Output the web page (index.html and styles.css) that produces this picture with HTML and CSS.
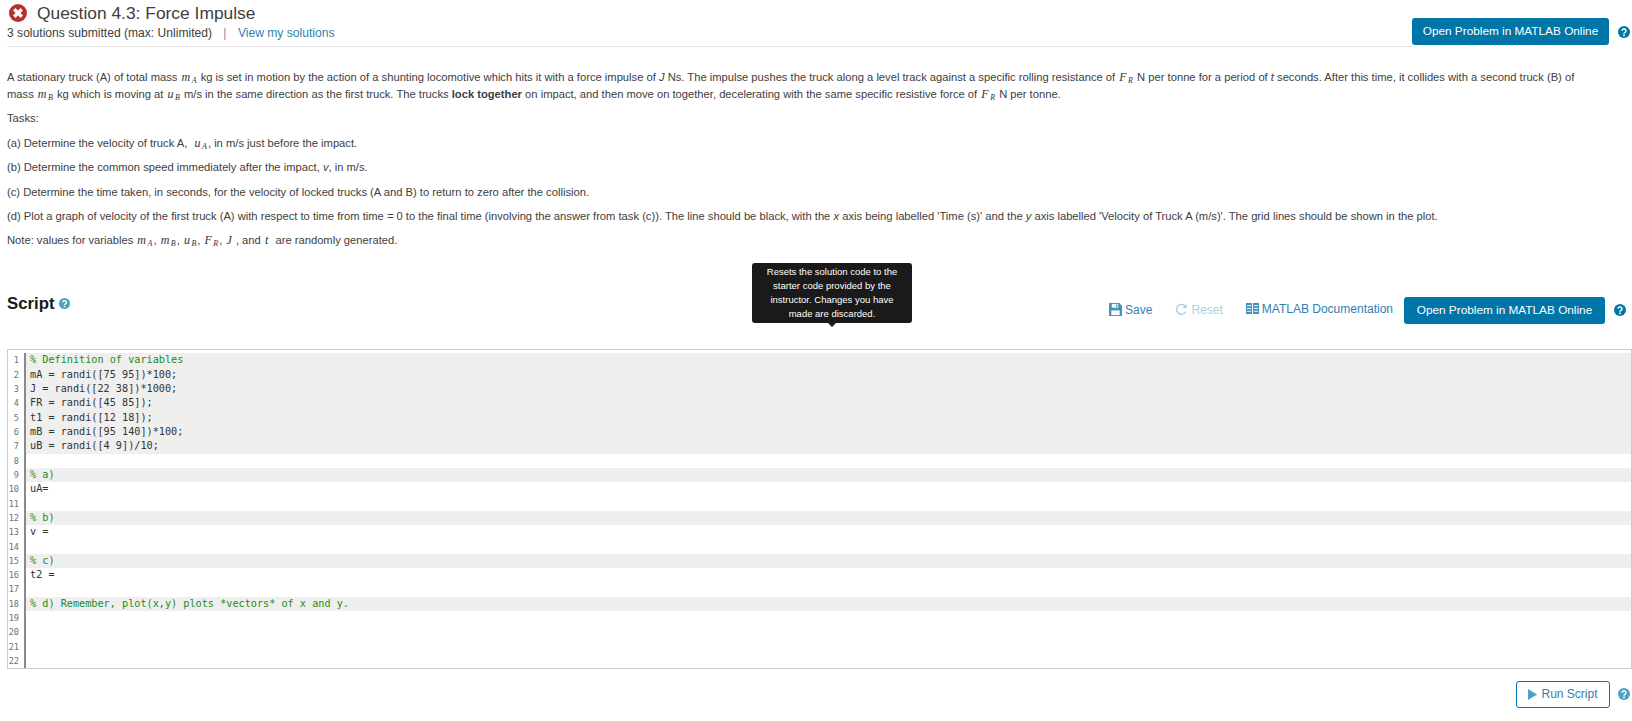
FILE: index.html
```html
<!DOCTYPE html>
<html lang="en">
<head>
<meta charset="utf-8">
<title>Question 4.3: Force Impulse</title>
<link rel="stylesheet" href="styles.css">
</head>
<body>
<svg class="defs" width="0" height="0" aria-hidden="true">
  <symbol id="help" viewBox="0 0 24 24">
    <circle cx="12" cy="12" r="12" fill="currentColor"/>
    <path d="M8 9.4a4 3.7 0 1 1 6.2 3.1c-1.5 1-2.2 1.5-2.2 3" fill="none" stroke="#fff" stroke-width="3"/>
    <rect x="10.3" y="17" width="3.4" height="3.2" fill="#fff"/>
  </symbol>
</svg>
<header class="head">
  <div class="head-main">
    <h1 class="title">
      <svg class="fail" viewBox="0 0 20 20"><circle cx="10" cy="10" r="10" fill="#b8312b"/><path d="M5.8 5.8l8.4 8.4M14.2 5.8l-8.4 8.4" stroke="#fff" stroke-width="3.8"/></svg>
      <span>Question 4.3: Force Impulse</span>
    </h1>
    <div class="sub">3 solutions submitted (max: Unlimited) <span class="sep">|</span> <a class="link" href="#">View my solutions</a></div>
  </div>
  <a class="btn" href="#">Open Problem in MATLAB Online</a>
  <svg class="help dark"><use href="#help"/></svg>
</header>

<section class="desc">
  <p>A stationary truck (A) of total mass <i class="m">m<sub>A</sub></i> kg is set in motion by the action of a shunting locomotive which hits it with a force impulse of <i>J</i> Ns. The impulse pushes the truck along a level track against a specific rolling resistance of <i class="m">F<sub>R</sub></i> N per tonne for a period of <i>t</i> seconds. After this time, it collides with a second truck (B) of mass <i class="m">m<sub>B</sub></i> kg which is moving at <i class="m">u<sub>B</sub></i> m/s in the same direction as the first truck. The trucks <b>lock together</b> on impact, and then move on together, decelerating with the same specific resistive force of <i class="m">F<sub>R</sub></i> N per tonne.</p>
  <p>Tasks:</p>
  <p>(a) Determine the velocity of truck A, &nbsp;<i class="m">u<sub>A</sub></i>, in m/s just before the impact.</p>
  <p>(b) Determine the common speed immediately after the impact, <i>v</i>, in m/s.</p>
  <p>(c) Determine the time taken, in seconds, for the velocity of locked trucks (A and B) to return to zero after the collision.</p>
  <p>(d) Plot a graph of velocity of the first truck (A) with respect to time from time = 0 to the final time (involving the answer from task (c)). The line should be black, with the <i>x</i> axis being labelled 'Time (s)' and the <i>y</i> axis labelled 'Velocity of Truck A (m/s)'. The grid lines should be shown in the plot.</p>
  <p>Note: values for variables <i class="m">m<sub>A</sub></i>, <i class="m">m<sub>B</sub></i>, <i class="m">u<sub>B</sub></i>, <i class="m">F<sub>R</sub></i>, <i class="m">J</i> , and <i class="m">t</i> &nbsp;are randomly generated.</p>
</section>

<section class="bar">
  <h2 class="script">Script <svg class="help small light"><use href="#help"/></svg></h2>
  <div class="actions">
    <a class="act" href="#">
      <svg class="ico" viewBox="0 0 14 14"><path d="M0 0h11l3 3v11H0z" fill="#3f93bd"/><rect x="3" y="1" width="7" height="4" fill="#fff"/><rect x="2.5" y="8" width="9" height="5" fill="#fff"/><rect x="7.5" y="1.6" width="1.5" height="2.6" fill="#3f93bd"/></svg>
      Save
    </a>
    <a class="act off" href="#">
      <svg class="ico" viewBox="0 0 14 14"><path d="M11.6 9.4A5.3 5.3 0 1 1 11 3.4" fill="none" stroke="#a9d0e3" stroke-width="1.5"/><path d="M12.6 .8v4.6H8z" fill="#a9d0e3"/></svg>
      Reset
    </a>
    <a class="act doc" href="#">
      <svg class="ico" viewBox="0 0 14 12"><path d="M0 0h6.4v12H0zM7.6 0H14v12H7.6z" fill="#3f93bd"/><path d="M1 3h4.4M1 6h4.4M1 9h4.4M8.6 3H13M8.6 6H13M8.6 9H13" stroke="#fff"/></svg>
      MATLAB Documentation
    </a>
    <a class="btn" href="#">Open Problem in MATLAB Online</a>
    <svg class="help dark"><use href="#help"/></svg>
  </div>
  <div class="tip">Resets the solution code to the starter code provided by the instructor. Changes you have made are discarded.</div>
</section>

<section class="editor">
  <div class="row shade"><span class="num">1</span><code class="c">% Definition of variables</code></div>
  <div class="row shade"><span class="num">2</span><code>mA = randi([75 95])*100;</code></div>
  <div class="row shade"><span class="num">3</span><code>J = randi([22 38])*1000;</code></div>
  <div class="row shade"><span class="num">4</span><code>FR = randi([45 85]);</code></div>
  <div class="row shade"><span class="num">5</span><code>t1 = randi([12 18]);</code></div>
  <div class="row shade"><span class="num">6</span><code>mB = randi([95 140])*100;</code></div>
  <div class="row shade"><span class="num">7</span><code>uB = randi([4 9])/10;</code></div>
  <div class="row"><span class="num">8</span><code></code></div>
  <div class="row shade"><span class="num">9</span><code class="c">% a)</code></div>
  <div class="row"><span class="num">10</span><code>uA=</code></div>
  <div class="row"><span class="num">11</span><code></code></div>
  <div class="row shade"><span class="num">12</span><code class="c">% b)</code></div>
  <div class="row"><span class="num">13</span><code>v =</code></div>
  <div class="row"><span class="num">14</span><code></code></div>
  <div class="row shade"><span class="num">15</span><code class="c">% c)</code></div>
  <div class="row"><span class="num">16</span><code>t2 =</code></div>
  <div class="row"><span class="num">17</span><code></code></div>
  <div class="row shade"><span class="num">18</span><code class="c">% d) Remember, plot(x,y) plots *vectors* of x and y.</code></div>
  <div class="row"><span class="num">19</span><code></code></div>
  <div class="row"><span class="num">20</span><code></code></div>
  <div class="row"><span class="num">21</span><code></code></div>
  <div class="row"><span class="num">22</span><code></code></div>
</section>

<footer class="foot">
  <a class="run" href="#"><svg class="play" viewBox="0 0 10 12"><path d="M0 0l10 6-10 6z" fill="#4f9fc7"/></svg>Run Script</a>
  <svg class="help light"><use href="#help"/></svg>
</footer>
</body>
</html>
```
FILE: styles.css
```css
* { box-sizing: border-box; }
html, body { margin: 0; padding: 0; }
body {
  background: #fff;
  color: #404040;
  font-family: "Liberation Sans", Arial, sans-serif;
  font-size: 11.2px;
  height: 721px;
  overflow: hidden;
  padding: 0 0 0 7px;
}
.defs { position: absolute; }
a { text-decoration: none; }

.head { display: flex; align-items: flex-start; height: 47px; }
.head-main { flex: 1; height: 47px; border-bottom: 1px solid #e6e6e6; }
.title {
  display: flex; align-items: center; gap: 10px;
  margin: 0; padding: 4px 0 0 2px;
  font-size: 17.4px; font-weight: 400; line-height: 18px; color: #404040;
}
.fail { width: 18px; height: 18px; flex: none; }
.sub { font-size: 12.1px; line-height: 16px; margin-top: 3px; color: #404040; }
.sep { margin: 0 8px; color: #888; }
.link { color: #2f7fb3; }
.btn {
  display: block; flex: none;
  width: 197px; height: 27px; margin-top: 18px;
  background: #0076a8; border-radius: 3px;
  color: #fff; font-size: 11.8px; line-height: 27px; text-align: center;
}
.help { width: 12px; height: 12px; flex: none; }
.dark { color: #0076a8; }
.light { color: #4f9fc7; }
.head .help { margin: 26px 2px 0 9px; }

.desc { padding-top: 22px; padding-right: 40px; line-height: 17px; }
.desc p { margin: 0 0 7.4px; }
.m { font-family: "Liberation Serif", serif; font-size: 12px; font-style: italic; color: #333; margin: 0 1px; }
.m sub { font-size: 8px; line-height: 0; vertical-align: -2px; padding-left: 1.5px; }
.desc b { font-weight: 700; }

.bar { position: relative; display: flex; justify-content: space-between; align-items: flex-start; height: 92px; }
.script { display: flex; align-items: center; gap: 4px; margin: 36px 0 0; color: #1a1a1a; font-size: 16.8px; font-weight: 700; line-height: 22px; }
.small { width: 11px; height: 11px; }
.actions { display: flex; align-items: flex-start; }
.act { display: flex; align-items: center; gap: 3px; height: 16px; margin-top: 45px; color: #2f7fb3; font-size: 12px; white-space: nowrap; }
.act + .act { margin-left: 23px; }
.off { color: #a9d0e3; }
.doc { margin-top: 44px; }
.ico { width: 13px; height: 13px; flex: none; }
.actions .btn { width: 201px; margin: 40px 0 0 11px; }
.actions .help { margin: 47px 6px 0 9px; }
.tip {
  position: absolute; left: 745px; top: 6px;
  width: 160px; height: 60px; padding: 2px 10px;
  background: #1a1a1a; border-radius: 3px;
  color: #fff; font-size: 9.5px; line-height: 14px; text-align: center;
}
.tip::after {
  content: ""; position: absolute; left: 75px; bottom: -4px;
  border: 5px solid transparent; border-top-color: #1a1a1a; border-bottom: 0;
}

.editor { width: 1625px; height: 320px; border: 1.5px solid #ccc; padding-top: 3.5px; overflow: hidden; }
.row { display: flex; height: 14.33px; line-height: 14.33px; }
.num { flex: none; width: 18px; border-right: 2px solid #8a8a8a; padding-right: 5px; text-align: right; color: #707070; font: 8.6px/14.33px "DejaVu Sans Mono", monospace; background: #fff; }
.row code { flex: 1; padding-left: 4px; color: #333; font: 10.2px/14.33px "DejaVu Sans Mono", monospace; }
.shade code { background: #efefef; }
.row code.c { color: #228b22; }

.foot { display: flex; align-items: center; justify-content: flex-end; height: 27px; margin-top: 12px; padding-right: 2px; }
.run {
  display: flex; align-items: center; justify-content: center; gap: 4px;
  width: 94px; height: 27px; border: 1.5px solid #0076a8; border-radius: 3px;
  color: #2f7fb3; font-size: 12px;
}
.play { width: 9px; height: 11px; }
.foot .help { margin-left: 8px; }
```
